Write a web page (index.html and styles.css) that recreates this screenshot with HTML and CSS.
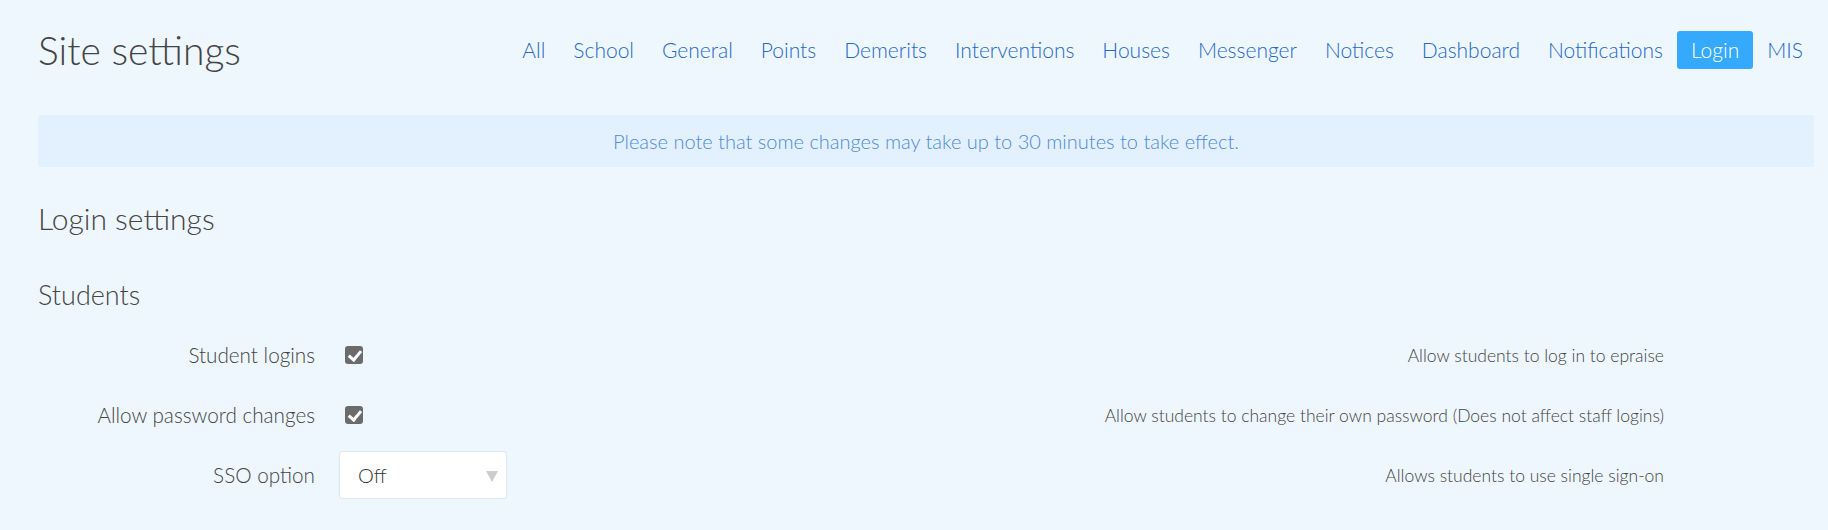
FILE: index.html
```html
<!DOCTYPE html>
<html lang="en">
<head>
  <meta charset="UTF-8" />
  <title>Site settings</title>
  <link rel="stylesheet" href="styles.css">
</head>
<body>
  <div class="page">
    <header class="top">
      <h1>Site settings</h1>
      <nav class="tabs">
        <a href="#">All</a>
        <a href="#">School</a>
        <a href="#">General</a>
        <a href="#">Points</a>
        <a href="#">Demerits</a>
        <a href="#">Interventions</a>
        <a href="#">Houses</a>
        <a href="#">Messenger</a>
        <a href="#">Notices</a>
        <a href="#">Dashboard</a>
        <a href="#">Notifications</a>
        <a href="#" class="active">Login</a>
        <a href="#">MIS</a>
      </nav>
    </header>

    <div class="notice">Please note that some changes may take up to 30 minutes to take effect.</div>

    <h2>Login settings</h2>
    <h3>Students</h3>

    <form class="settings">
      <div class="row">
        <label>Student logins</label>
        <div class="control"><span class="check"></span></div>
        <p class="help">Allow students to log in to epraise</p>
      </div>
      <div class="row">
        <label>Allow password changes</label>
        <div class="control"><span class="check"></span></div>
        <p class="help">Allow students to change their own password (Does not affect staff logins)</p>
      </div>
      <div class="row">
        <label>SSO option</label>
        <div class="control">
          <div class="select">Off<span class="arrow"></span></div>
        </div>
        <p class="help">Allows students to use single sign-on</p>
      </div>
    </form>
  </div>
</body>
</html>
```

FILE: styles.css
```css
body {
  margin: 0;
  background-color: #eef7fe;
  color: #444;
  font-family: Lato, "Open Sans", sans-serif;
  font-weight: 300;
}
.page {
  padding: 0 14px 0 38px;
}
.top {
  display: flex;
  align-items: center;
  justify-content: space-between;
  height: 100px;
}
h1 {
  margin: 0;
  font-size: 39px;
  font-weight: 300;
  color: #444;
}
.tabs {
  display: flex;
  align-items: center;
  margin-right: -3px;
}
.tabs a {
  color: #2568c6;
  text-decoration: none;
  font-size: 21px;
  padding: 6px 14px;
  line-height: 26px;
  border-radius: 3px;
}
.tabs a.active {
  background-color: #35aafc;
  color: white;
}
.notice {
  margin-top: 15px;
  height: 52px;
  line-height: 52px;
  background-color: #e3f1fe;
  border-radius: 3px;
  text-align: center;
  color: #4f8ad7;
  font-size: 20px;
}
h2 {
  margin: 33px 0 0;
  font-size: 30px;
  font-weight: 300;
  line-height: 36px;
}
h3 {
  margin: 44px 0 0;
  font-size: 27px;
  font-weight: 300;
  line-height: 30px;
}
.settings {
  margin-top: 15px;
}
.row {
  display: grid;
  grid-template-columns: 277px 1fr auto;
  align-items: center;
  height: 60px;
  padding-right: 150px;
}
.row label {
  text-align: right;
  font-size: 20.7px;
  color: #444;
}
.control {
  padding-left: 30px;
  display: flex;
  align-items: center;
}
.check {
  position: relative;
  width: 18px;
  height: 18px;
  border-radius: 3px;
  background-color: #6b6b6b;
}
.check::after {
  content: "";
  position: absolute;
  left: 6px;
  top: 2px;
  width: 5px;
  height: 10px;
  border: solid white;
  border-width: 0 3px 3px 0;
  transform: rotate(40deg);
}
.select {
  position: relative;
  margin-left: -6px;
  width: 148px;
  height: 46px;
  line-height: 46px;
  padding-left: 18px;
  background-color: white;
  border: 1px solid #dce9f6;
  border-radius: 3px;
  font-size: 20px;
  color: #333;
}
.arrow {
  position: absolute;
  right: 8px;
  top: 19px;
  border-left: 6px solid transparent;
  border-right: 6px solid transparent;
  border-top: 11px solid #ccc;
}
.help {
  margin: 0;
  text-align: right;
  font-size: 17.5px;
  color: #444;
}
```
